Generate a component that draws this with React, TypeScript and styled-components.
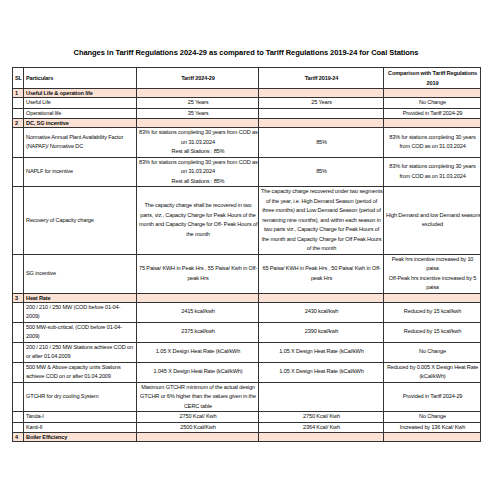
import React from "react";
import styled, { createGlobalStyle } from "styled-components";

const Global = createGlobalStyle`
  html, body { margin: 0; padding: 0; background: #ffffff; }
  body { font-family: "Liberation Sans", Arial, sans-serif; color: #0d0d0d; }
`;

const Page = styled.div`
  width: 495px;
  height: 495px;
  box-sizing: border-box;
  padding: 47px 15px 0 12px;
  display: flex;
  flex-direction: column;
  align-items: stretch;
`;

const Title = styled.h1`
  margin: 0 0 9px 0;
  font-size: 7.5px;
  line-height: 11px;
  font-weight: 700;
  text-align: center;
  white-space: nowrap;
  letter-spacing: -0.05px;
  color: #000;
`;

const Table = styled.table`
  width: 468px;
  border-collapse: collapse;
  table-layout: fixed;
  border: 1.5px solid #262626;
  font-size: 5.6px;
  letter-spacing: -0.15px;
`;

const HeadCell = styled.th<{ $align?: "left" | "center" }>`
  border: 1px solid #333;
  padding: 0 1px 0 2px;
  font-weight: 700;
  line-height: 10px;
  height: 20px;
  text-align: ${(p) => p.$align ?? "center"};
  vertical-align: middle;
  white-space: nowrap;
  overflow: hidden;
`;

const SectionRow = styled.tr`
  background: #fbe2d5;
`;

const SectionCell = styled.td`
  border: 1px solid #333;
  padding: 0 1px 0 2px;
  font-weight: 700;
  line-height: 8px;
  height: 8px;
  white-space: nowrap;
  overflow: hidden;
`;

const Cell = styled.td<{ $align?: "left" | "center" }>`
  border: 1px solid #333;
  padding: 0 1px 0 2px;
  line-height: 9.5px;
  text-align: ${(p) => p.$align ?? "center"};
  vertical-align: middle;
  white-space: nowrap;
  overflow: hidden;
`;

type Row =
  | { kind: "section"; sl: string; title: string }
  | { kind: "data"; particulars: string[]; t2429: string[]; t1924: string[]; cmp: string[] };

const rows: Row[] = [
  { kind: "section", sl: "1", title: "Useful Life & operation life" },
  { kind: "data", particulars: ["Useful Life"], t2429: ["25 Years"], t1924: ["25 Years"], cmp: ["No Change"] },
  { kind: "data", particulars: ["Operational life"], t2429: ["35 Years"], t1924: [], cmp: ["Provided in Tariff 2024-29"] },
  { kind: "section", sl: "2", title: "DC, SG incentive" },
  {
    kind: "data",
    particulars: ["Normative Annual Plant Availability Factor", "(NAPAF)/ Normative DC"],
    t2429: ["83% for stations completing 30 years from COD as", "on 31.03.2024", "Rest all Stations : 85%"],
    t1924: ["85%"],
    cmp: ["83% for stations completing 30 years", "from COD as on 31.03.2024"],
  },
  {
    kind: "data",
    particulars: ["NAPLF for incentive"],
    t2429: ["83% for stations completing 30 years from COD as", "on 31.03.2024", "Rest all Stations : 85%"],
    t1924: ["85%"],
    cmp: ["83% for stations completing 30 years", "from COD as on 31.03.2024"],
  },
  {
    kind: "data",
    particulars: ["Recovery of Capacity charge"],
    t2429: [
      "The capacity charge shall be recovered in two",
      "parts, viz., Capacity Charge for Peak Hours of the",
      "month and Capacity Charge for Off- Peak Hours of",
      "the month",
    ],
    t1924: [
      "The capacity charge recovered under two segments",
      "of the year, i.e. High Demand Season (period of",
      "three months) and Low Demand Season (period of",
      "remaining nine months), and within each season in",
      "two parts viz., Capacity Charge for Peak Hours of",
      "the month and Capacity Charge for Off Peak Hours",
      "of the month",
    ],
    cmp: ["High Demand and low Demand seasons", "excluded"],
  },
  {
    kind: "data",
    particulars: ["SG incentive"],
    t2429: ["75 Paisa/ KWH in Peak Hrs , 55 Paisa/ Kwh in Off-", "peak Hrs"],
    t1924: ["65 Paisa/ KWH in Peak Hrs , 50 Paisa/ Kwh in Off-", "peak Hrs"],
    cmp: ["Peak hrs incentive increased by 10", "paisa", "Off-Peak hrs incentive increased by 5", "paisa"],
  },
  { kind: "section", sl: "3", title: "Heat Rate" },
  {
    kind: "data",
    particulars: ["200 / 210 / 250 MW (COD before 01-04-", "2009)"],
    t2429: ["2415 kcal/kwh"],
    t1924: ["2430 kcal/kwh"],
    cmp: ["Reduced by 15 kcal/kwh"],
  },
  {
    kind: "data",
    particulars: ["500 MW-sub-critical, (COD before 01-04-", "2009)"],
    t2429: ["2375 kcal/kwh"],
    t1924: ["2390 kcal/kwh"],
    cmp: ["Reduced by 15 kcal/kwh"],
  },
  {
    kind: "data",
    particulars: ["200 / 210 / 250 MW Stations achieve COD on", "or after 01.04.2009"],
    t2429: ["1.05 X Design Heat Rate (kCal/kWh"],
    t1924: ["1.05 X Design Heat Rate (kCal/kWh"],
    cmp: ["No Change"],
  },
  {
    kind: "data",
    particulars: ["500 MW & Above capacity units Stations", "achieve COD on or after 01.04.2009"],
    t2429: ["1.045 X Design Heat Rate (kCal/kWh)"],
    t1924: ["1.05 X Design Heat Rate (kCal/kWh"],
    cmp: ["Reduced by 0.005 X Design Heat Rate", "(kCal/kWh)"],
  },
  {
    kind: "data",
    particulars: ["GTCHR for dry cooling System"],
    t2429: ["Maximum GTCHR minimum of the actual design", "GTCHR or 6% higher than the values given in the", "CERC table"],
    t1924: [],
    cmp: ["Provided in Tariff 2024-29"],
  },
  { kind: "data", particulars: ["Tanda-I"], t2429: ["2750 Kcal/ Kwh"], t1924: ["2750 Kcal/ Kwh"], cmp: ["No Change"] },
  { kind: "data", particulars: ["Kanti-II"], t2429: ["2500 Kcal/Kwh"], t1924: ["2364 Kcal/ Kwh"], cmp: ["Increased by 136 Kcal/ Kwh"] },
  { kind: "section", sl: "4", title: "Boiler Efficiency" },
];

const Lines: React.FC<{ lines: string[] }> = ({ lines }) => (
  <>
    {lines.length === 0
      ? "\u00a0"
      : lines.map((l, i) => (
          <React.Fragment key={i}>
            {i > 0 && <br />}
            {l}
          </React.Fragment>
        ))}
  </>
);

export default function App() {
  return (
    <>
      <Global />
      <Page>
        <Title>Changes in Tariff Regulations 2024-29 as compared to Tariff Regulations 2019-24 for Coal Stations</Title>
        <Table>
          <colgroup>
            <col style={{ width: 11 }} />
            <col style={{ width: 113 }} />
            <col style={{ width: 122 }} />
            <col style={{ width: 125 }} />
            <col style={{ width: 97 }} />
          </colgroup>
          <thead>
            <tr>
              <HeadCell $align="left">SL</HeadCell>
              <HeadCell $align="left">Particulars</HeadCell>
              <HeadCell>Tariff 2024-29</HeadCell>
              <HeadCell>Tariff 2019-24</HeadCell>
              <HeadCell>
                Comparison with Tariff Regulations
                <br />
                2019
              </HeadCell>
            </tr>
          </thead>
          <tbody>
            {rows.map((r, i) =>
              r.kind === "section" ? (
                <SectionRow key={i}>
                  <SectionCell>{r.sl}</SectionCell>
                  <SectionCell>{r.title}</SectionCell>
                  <SectionCell />
                  <SectionCell />
                  <SectionCell />
                </SectionRow>
              ) : (
                <tr key={i}>
                  <Cell />
                  <Cell $align="left">
                    <Lines lines={r.particulars} />
                  </Cell>
                  <Cell>
                    <Lines lines={r.t2429} />
                  </Cell>
                  <Cell>
                    <Lines lines={r.t1924} />
                  </Cell>
                  <Cell>
                    <Lines lines={r.cmp} />
                  </Cell>
                </tr>
              )
            )}
          </tbody>
        </Table>
      </Page>
    </>
  );
}
